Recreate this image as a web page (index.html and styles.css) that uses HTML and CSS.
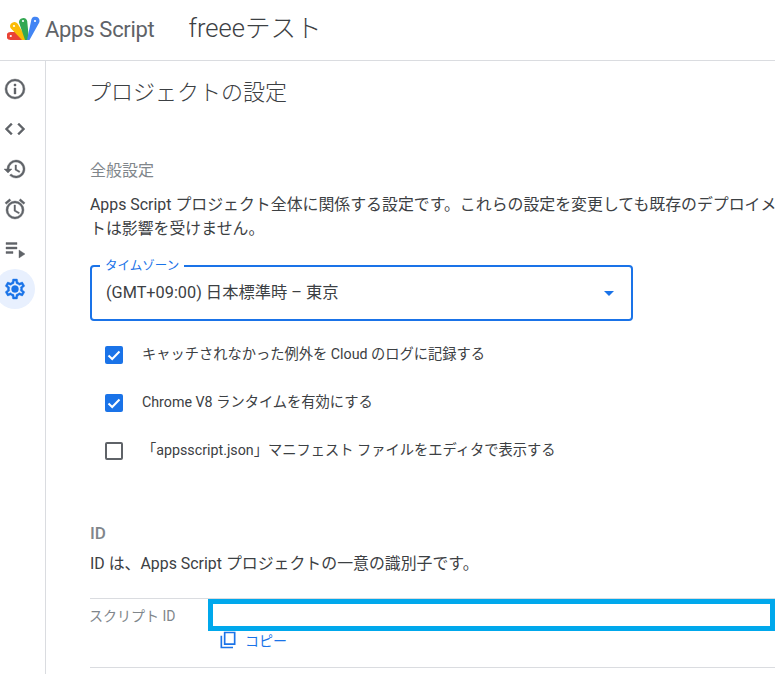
FILE: index.html
```html
<!DOCTYPE html>
<html lang="ja">
<head>
<meta charset="utf-8">
<title>freeeテスト</title>
<link rel="stylesheet" href="styles.css">
</head>
<body>
<div class="page">
<header class="topbar">
  <svg class="logo" viewBox="0 0 34 28" width="34" height="28">
    <path d="M3.500 19h10l7.500 8H3.500a4 4 0 0 1 0-8z" fill="#ea4335"/>
    <path d="M3.500 15a4.200 4.200 0 0 1 7.200-4.200L20.500 27H15z" fill="#fbbc04"/>
    <path d="M12 9.500a4.200 4.200 0 0 1 8.200-1.500L22 27h-4z" fill="#34a853"/>
    <path d="M24.500 6a4.200 4.200 0 0 1 7.600 3.800L22.500 27H20z" fill="#4285f4"/>
    <circle cx="3.800" cy="23" r="1.100" fill="#fff"/><circle cx="7" cy="13" r="1.100" fill="#fff"/><circle cx="16" cy="8" r="1.100" fill="#fff"/><circle cx="28" cy="8" r="1.100" fill="#fff"/>
  </svg>
  <span class="product">Apps Script</span>
  <span class="project">freeeテスト</span>
</header>
<div class="body">
  <nav class="rail">
    <div class="rail-item"><svg viewBox="0 0 24 24" class="ri"><path d="M11 7h2v2h-2zm0 4h2v6h-2zm1-9a10 10 0 1 0 0 20 10 10 0 0 0 0-20zm0 18a8 8 0 1 1 0-16 8 8 0 0 1 0 16z"/></svg></div>
    <div class="rail-item"><svg viewBox="0 0 24 24" class="ri"><path d="M9.400 16.600 4.800 12l4.600-4.600L8 6l-6 6 6 6zm5.200 0 4.600-4.600-4.600-4.600L16 6l6 6-6 6z"/></svg></div>
    <div class="rail-item"><svg viewBox="0 0 24 24" class="ri"><path d="M13 3a9 9 0 0 0-9 9H1l4 4 4-4H6a7 7 0 1 1 2.050 4.950l-1.420 1.420A9 9 0 1 0 13 3zm-1 5v5l4.280 2.540.72-1.210-3.500-2.080V8z"/></svg></div>
    <div class="rail-item"><svg viewBox="0 0 24 24" class="ri"><path d="M22 5.720 17.400 1.860l-1.290 1.530 4.600 3.860zM7.880 3.390 6.600 1.860 2 5.710l1.290 1.530zM12.500 8H11v6l4.750 2.850.75-1.230-4-2.370zM12 4a9 9 0 1 0 0 18 9 9 0 0 0 0-18zm0 16a7 7 0 1 1 0-14 7 7 0 0 1 0 14z"/></svg></div>
    <div class="rail-item"><svg viewBox="0 0 24 24" class="ri"><path d="M3 5.500h11v2H3zm0 4.500h11v2H3zm0 4.500h7v2H3zM16 13l6 4-6 4z"/></svg></div>
    <div class="rail-item active"><svg viewBox="0 0 24 24" class="ri"><path d="M19.430 12.980c.04-.32.070-.64.070-.98s-.03-.66-.07-.98l2.110-1.650a.5.500 0 0 0 .12-.64l-2-3.460a.5.500 0 0 0-.61-.22l-2.490 1a7.300 7.300 0 0 0-1.690-.98l-.38-2.650A.49.490 0 0 0 14 2h-4a.49.490 0 0 0-.49.420l-.38 2.650c-.61.25-1.170.59-1.690.98l-2.490-1a.49.490 0 0 0-.61.220l-2 3.460a.49.490 0 0 0 .12.640l2.110 1.650c-.04.32-.07.650-.07.980s.03.660.07.980l-2.110 1.650a.5.500 0 0 0-.12.640l2 3.460c.12.220.39.300.61.220l2.490-1c.52.400 1.080.73 1.690.98l.38 2.650c.03.240.24.420.49.420h4c.25 0 .46-.18.49-.42l.38-2.650c.61-.25 1.170-.59 1.690-.98l2.490 1c.23.090.49 0 .61-.22l2-3.460a.5.500 0 0 0-.12-.64zm-1.980-1.710c.4.310.5.520.05.730s-.2.430-.05.730l-.14 1.130.89.700 1.080.84-.7 1.210-1.270-.51-1.040-.42-.9.680c-.43.320-.84.560-1.250.73l-1.060.43-.16 1.130-.2 1.350h-1.400l-.19-1.350-.16-1.130-1.060-.43a5.700 5.700 0 0 1-1.230-.71l-.91-.7-1.060.43-1.270.51-.7-1.210 1.080-.84.890-.7-.14-1.130A8 8 0 0 1 6.500 12c0-.2.020-.43.050-.73l.14-1.130-.89-.7-1.080-.84.7-1.210 1.270.51 1.040.42.900-.68c.43-.32.840-.56 1.250-.73l1.060-.43.160-1.130.2-1.350h1.390l.19 1.350.16 1.130 1.060.43c.43.180.83.410 1.230.71l.91.700 1.060-.43 1.270-.51.7 1.210-1.070.85-.89.7zM12 8.500a3.500 3.500 0 1 0 0 7 3.500 3.500 0 0 0 0-7z"/></svg></div>
  </nav>
  <main class="content">
    <h1 class="title">プロジェクトの設定</h1>
    <h2 class="section general">全般設定</h2>
    <p class="desc">Apps Script プロジェクト全体に関係する設定です。これらの設定を変更しても既存のデプロイメン<br>トは影響を受けません。</p>
    <div class="field">
      <span class="legend">タイムゾーン</span>
      <span class="value">(GMT+09:00) 日本標準時 – 東京</span>
      <span class="arrow"></span>
    </div>
    <ul class="checks">
      <li class="check"><span class="box on"><svg viewBox="0 0 18 18" width="18" height="18"><path d="M3.500 9.500 7.200 13 14.500 5.500" fill="none" stroke="#fff" stroke-width="2"/></svg></span>キャッチされなかった例外を Cloud のログに記録する</li>
      <li class="check"><span class="box on"><svg viewBox="0 0 18 18" width="18" height="18"><path d="M3.500 9.500 7.200 13 14.500 5.500" fill="none" stroke="#fff" stroke-width="2"/></svg></span>Chrome V8 ランタイムを有効にする</li>
      <li class="check"><span class="box"></span>「appsscript.json」マニフェスト ファイルをエディタで表示する</li>
    </ul>
    <h2 class="section id-head">ID</h2>
    <p class="desc id-desc">ID は、Apps Script プロジェクトの一意の識別子です。</p>
    <div class="id-row">
      <span class="id-label">スクリプト ID</span>
      <div class="id-val">
        <div class="redact"></div>
        <div class="copy"><svg viewBox="0 0 24 24" width="20" height="20"><path d="M7 2h14v16H7zm2 2v12h10V4zM3 7h2v13h13v2H3z" fill="#1a73e8"/></svg><span>コピー</span></div>
      </div>
    </div>
  </main>
</div>
</div>
</body>
</html>
```
FILE: styles.css
```css
* { box-sizing: border-box; }
html, body { margin: 0; height: 100%; background: #fff; overflow: hidden; }
body { font-family: Roboto, "Noto Sans CJK JP", sans-serif; color: #3c4043; }
.page { width: 775px; height: 674px; display: flex; flex-direction: column; overflow: hidden; }
.topbar { height: 61px; flex: none; border-bottom: 1px solid #dadce0; display: flex; align-items: center; padding-left: 7px; }
.logo { flex: none; margin-top: -6px; }
.product { font-size: 22px; color: #5f6368; margin-left: 4px; letter-spacing: -0.3px; margin-top: -2px; }
.project { font-size: 25.500px; font-weight: 300; color: #3c4043; margin-left: 34px; margin-top: -10px; }
.body { flex: 1; display: flex; min-height: 0; }
.rail { width: 46px; flex: none; border-right: 1px solid #dadce0; padding-top: 8px; display: flex; flex-direction: column; }
.rail-item { width: 40px; height: 40px; margin-left: -5px; display: flex; align-items: center; justify-content: center; border-radius: 50%; flex: none; }
.ri { width: 24px; height: 24px; fill: #5f6368; stroke: #5f6368; stroke-width: 0.4; }
.rail-item.active { background: #e8f0fe; }
.rail-item.active .ri { fill: #1a73e8; stroke: #1a73e8; }
.content { flex: 1; padding-left: 44px; min-width: 0; }
.title { font-size: 22px; font-weight: 300; margin: 17px 0 0 -1px; line-height: 30px; color: #3c4043; }
.section { font-size: 16px; font-weight: 400; color: #80868b; line-height: 24px; margin: 0; }
.general { margin-top: 51px; }
.desc { font-size: 15.900px; line-height: 24px; margin: 0; white-space: nowrap; color: #3c4043; }
.general + .desc { margin-top: 10px; }
.field { position: relative; width: 543px; height: 56px; margin-top: 24px; border: 2px solid #1a73e8; border-radius: 4px; display: flex; align-items: center; padding-left: 14px; }
.legend { position: absolute; top: -9px; left: 8px; font-size: 12.500px; line-height: 16px; padding: 0 5px; background: #fff; color: #1a73e8; }
.value { font-size: 16.300px; color: #3c4043; margin-top: -4px; }
.arrow { position: absolute; right: 17px; top: 24px; border-left: 5px solid transparent; border-right: 5px solid transparent; border-top: 5px solid #1a73e8; }
.checks { list-style: none; margin: 9px 0 0; padding: 0 0 0 15px; }
.check { height: 48px; padding-bottom: 4px; display: flex; align-items: center; font-size: 14.250px; color: #3c4043; }
.box { width: 18px; height: 18px; border: 2px solid #5f6368; border-radius: 2px; margin: 6px 19px 0 0; flex: none; }
.box.on { background: #1a73e8; border: none; }
.box svg { display: block; }
.id-head { margin-top: 47px; font-size: 17px; font-weight: 500; }
.id-desc { margin-top: 7px; }
.id-row { margin-top: 22px; border-top: 1px solid #dadce0; border-bottom: 1px solid #dadce0; height: 70px; display: flex; }
.id-label { width: 119px; margin-left: -1px; flex: none; font-size: 14px; color: #80868b; padding-top: 6px; }
.id-val { flex: 1; min-width: 0; }
.redact { height: 32px; border: 5px solid #00a8ec; }
.copy { display: flex; align-items: center; padding-left: 10px; color: #1a73e8; font-size: 14px; height: 18px; }
.copy span { margin-left: 7px; }
```
